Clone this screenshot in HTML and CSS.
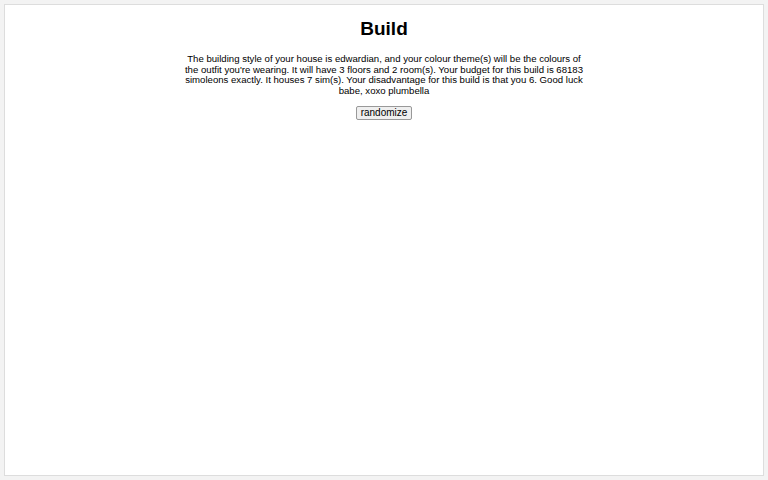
FILE: index.html
```html
<!DOCTYPE html>
<html lang="en">

<head>
    <meta charset="UTF-8">
    <meta name="viewport" content="width=device-width, initial-scale=1.0">
    <title>Build</title>
    <link rel="stylesheet" href="styles.css">
</head>

<body>

    <!-- Page Container -->
    <div class="page">
        <h1 class="title">Build</h1>
        <p class="result" id="result">The building style of your house is edwardian, and your colour theme(s) will be the colours of the outfit you're wearing. It will have 3 floors and 2 room(s). Your budget for this build is 68183 simoleons exactly. It houses 7 sim(s). Your disadvantage for this build is that you 6. Good luck babe, xoxo plumbella</p>
        <button class="randomize-btn" id="randomize-btn">randomize</button>
    </div>

</body>

</html>
```

FILE: styles.css
```css
/* General Styles */
html {
    height: 100%;
}

body {
    font-family: 'Liberation Sans', Arial, sans-serif;
    margin: 0;
    padding: 4px;
    box-sizing: border-box;
    background-color: #f3f3f3;
    height: 100%;
    display: flex;
}

/* Page Container */
.page {
    flex-grow: 1;
    background-color: white;
    border: 1px solid #dddddd;
    display: flex;
    flex-direction: column;
    align-items: center;
    padding-top: 13px;
}

.title {
    font-size: 19px;
    font-weight: bold;
    margin: 0 0 14px 0;
    color: #000;
}

.result {
    width: 404px;
    font-size: 9.6px;
    line-height: 10.7px;
    text-align: center;
    margin: 0 0 9px 0;
    color: #000;
}

.randomize-btn {
    font-family: 'Liberation Sans', Arial, sans-serif;
    font-size: 10px;
    padding: 0 4px 1px 4px;
    background-color: #efefef;
    border: 1px solid #999;
    border-radius: 2px;
    color: #000;
}
```
